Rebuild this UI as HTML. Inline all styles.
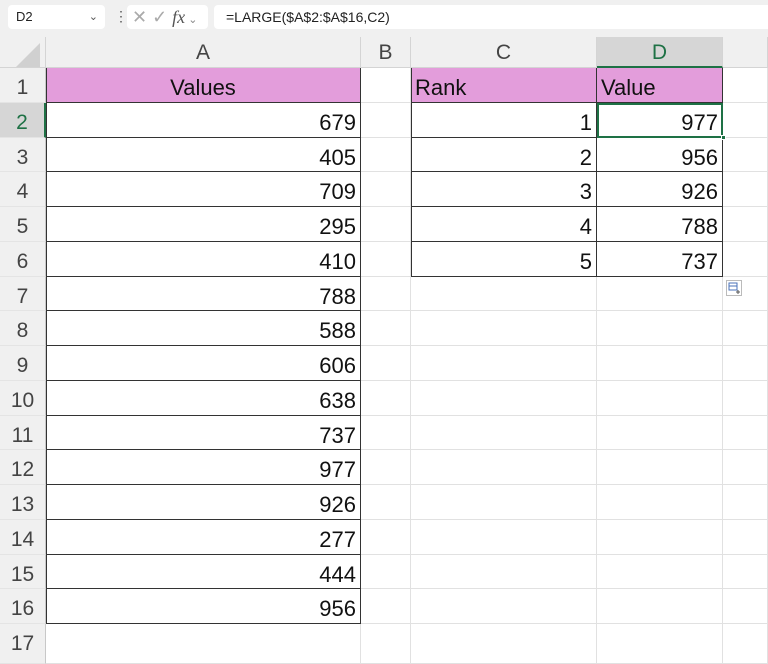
<!DOCTYPE html>
<html><head><style>
*{box-sizing:border-box;margin:0;padding:0}
body{width:768px;height:643px;overflow:hidden;background:#fff;font-family:"Liberation Sans",sans-serif;position:relative}
.fb{position:absolute;left:0;top:0;width:768px;height:37px;background:#f0f0f0}
.box{position:absolute;top:5px;height:24px;background:#fff;border-radius:4px;font-size:13px;color:#222;line-height:24px}
.g{position:absolute;left:0;top:37px;display:grid;grid-template-columns:46px 315px 50px 186px 126px 45px;grid-template-rows:31px repeat(16,34.75px) 40px}
.g div{border-right:1px solid #e1e1e1;border-bottom:1px solid #e1e1e1;font-size:22px;color:#111;line-height:33px;padding:3px 4px 0;white-space:nowrap}
.g .h{background:#f0f0f0;color:#444;text-align:center;font-size:21px;line-height:30px;padding-top:1px;border-color:#d4d4d4}
.g .rh{background:#f0f0f0;color:#444;text-align:center;font-size:21px;border-color:#e4e4e4;border-right-color:#c8c8c8}
.g .p{background:#e39ddb;border-right:1px solid #333;border-bottom:1px solid #333}
.g .d{border-right:1px solid #333;border-bottom:1px solid #333;text-align:right}
.g .l{box-shadow:inset 1px 0 #333}
.g .c{text-align:center}
.g .sel{background:#d6d6d6;color:#1e7145;border-bottom:2px solid #1e7145}
.g .selr{background:#d6d6d6;color:#1e7145;border-right:2px solid #1e7145}
</style></head><body>
<div class="fb">
<div class="box" style="left:8px;width:97px;padding-left:8px">D2<span style="position:absolute;right:7px;color:#555;font-size:11px">&#8964;</span></div>
<div style="position:absolute;left:114px;top:8px;color:#555;font-size:14px">&#8942;</div>
<div class="box" style="left:127px;width:81px;color:#aaa;font-size:18px;padding-left:5px">&#10005; &#10003; <i style="font-family:'Liberation Serif',serif;color:#555;font-size:18px">fx</i><span style="font-size:11px;color:#888"> &#8964;</span></div>
<div class="box" style="left:214px;width:560px;padding-left:12px;font-size:14px">=LARGE($A$2:$A$16,C2)</div>
</div>
<div class="g">
<div class="h" style="background:#f0f0f0;padding:0"><svg width="28" height="28" style="margin:2px 0 0 10px"><path d="M26 4 L26 28 L2 28 Z" fill="#d0d0d0"/></svg></div><div class="h">A</div><div class="h">B</div><div class="h">C</div><div class="h sel">D</div><div class="h"></div>
<div class="rh">1</div><div class="p c l">Values</div><div></div><div class="p l">Rank</div><div class="p">Value</div><div></div>
<div class="rh selr">2</div><div class="d l">679</div><div></div><div class="d l">1</div><div class="d" style="outline:2px solid #1e7145;outline-offset:-2px">977</div><div></div>
<div class="rh">3</div><div class="d l">405</div><div></div><div class="d l">2</div><div class="d">956</div><div></div>
<div class="rh">4</div><div class="d l">709</div><div></div><div class="d l">3</div><div class="d">926</div><div></div>
<div class="rh">5</div><div class="d l">295</div><div></div><div class="d l">4</div><div class="d">788</div><div></div>
<div class="rh">6</div><div class="d l">410</div><div></div><div class="d l">5</div><div class="d">737</div><div></div>
<div class="rh">7</div><div class="d l">788</div><div></div><div></div><div></div><div></div>
<div class="rh">8</div><div class="d l">588</div><div></div><div></div><div></div><div></div>
<div class="rh">9</div><div class="d l">606</div><div></div><div></div><div></div><div></div>
<div class="rh">10</div><div class="d l">638</div><div></div><div></div><div></div><div></div>
<div class="rh">11</div><div class="d l">737</div><div></div><div></div><div></div><div></div>
<div class="rh">12</div><div class="d l">977</div><div></div><div></div><div></div><div></div>
<div class="rh">13</div><div class="d l">926</div><div></div><div></div><div></div><div></div>
<div class="rh">14</div><div class="d l">277</div><div></div><div></div><div></div><div></div>
<div class="rh">15</div><div class="d l">444</div><div></div><div></div><div></div><div></div>
<div class="rh">16</div><div class="d l">956</div><div></div><div></div><div></div><div></div>
<div class="rh">17</div><div></div><div></div><div></div><div></div><div></div>
</div>
<div style="position:absolute;left:721px;top:135px;width:5px;height:5px;background:#1e7145;border:1px solid #fff"></div>
<svg style="position:absolute;left:726px;top:280px" width="16" height="16"><rect x="0.5" y="0.5" width="15" height="15" fill="#fff" stroke="#bbb"/><rect x="3" y="3" width="8" height="7" fill="none" stroke="#4a72b8"/><line x1="3" y1="6" x2="11" y2="6" stroke="#4a72b8"/><path d="M10 12h4M12 10v4" stroke="#555"/></svg>
</body></html>
